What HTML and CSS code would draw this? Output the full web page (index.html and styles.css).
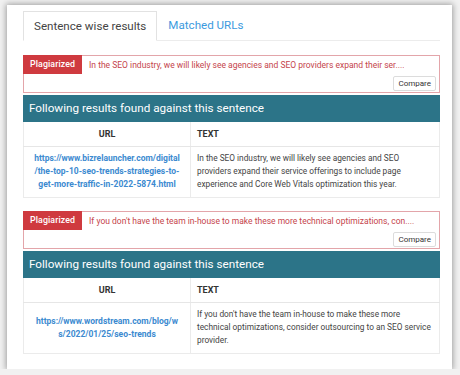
FILE: index.html
```html
<!DOCTYPE html>
<html>
<head>
<meta charset="utf-8">
<link rel="stylesheet" href="styles.css">
</head>
<body>
<div class="card">
  <div class="tabs">
    <div class="tab active">Sentence wise results</div>
    <div class="tab link">Matched URLs</div>
  </div>

  <div class="result first">
    <div class="plag">
      <div class="plag-row">
        <span class="badge">Plagiarized</span>
        <span class="sentence">In the SEO industry, we will likely see agencies and SEO providers expand their ser....</span>
      </div>
      <div class="btn-row"><button class="compare">Compare</button></div>
    </div>
    <div class="found">Following results found against this sentence</div>
    <table class="matches">
      <thead>
        <tr><th class="col-url">URL</th><th class="col-text">TEXT</th></tr>
      </thead>
      <tbody>
        <tr>
          <td class="cell-url"><a href="#">https://www.bizrelauncher.com/digital<br>/the-top-10-seo-trends-strategies-to-<br>get-more-traffic-in-2022-5874.html</a></td>
          <td class="cell-text">In the SEO industry, we will likely see agencies and SEO<br>providers expand their service offerings to include page<br>experience and Core Web Vitals optimization this year.</td>
        </tr>
      </tbody>
    </table>
  </div>

  <div class="result">
    <div class="plag">
      <div class="plag-row">
        <span class="badge">Plagiarized</span>
        <span class="sentence">If you don't have the team in-house to make these more technical optimizations, con....</span>
      </div>
      <div class="btn-row"><button class="compare">Compare</button></div>
    </div>
    <div class="found">Following results found against this sentence</div>
    <table class="matches">
      <thead>
        <tr><th class="col-url">URL</th><th class="col-text">TEXT</th></tr>
      </thead>
      <tbody>
        <tr>
          <td class="cell-url"><a href="#">https://www.wordstream.com/blog/w<br>s/2022/01/25/seo-trends</a></td>
          <td class="cell-text">If you don't have the team in-house to make these more<br>technical optimizations, consider outsourcing to an SEO service<br>provider.</td>
        </tr>
      </tbody>
    </table>
  </div>
</div>
</body>
</html>
```

FILE: styles.css
```css
html, body {
  margin: 0;
  padding: 0;
}
body {
  background: #f1f1f1;
  font-family: Roboto, "Liberation Sans", sans-serif;
  color: #333;
}
.card {
  width: 417px;
  margin: 5px 0 0 7px;
  padding: 6px 12px 15px 16px;
  background: #fff;
  box-shadow: 0 0 6px 1px rgba(0, 0, 0, 0.35);
}
.tabs {
  display: flex;
  align-items: flex-end;
  border-bottom: 1px solid #ececec;
  height: 29px;
}
.tab {
  font-size: 11.6px;
  height: 29px;
  line-height: 29px;
  box-sizing: border-box;
}
.tab.active {
  padding: 0 10px;
  border: 1px solid #e2e2e2;
  border-bottom-color: #fff;
  margin-bottom: -1px;
  height: 30px;
  color: #444;
  background: #fff;
}
.tab.link {
  margin-left: 11px;
  color: #3c9ade;
}
.result.first {
  margin-top: 14px;
}
.result {
  margin-top: 13px;
}
.plag {
  border: 1px solid #e3a5aa;
  height: 36px;
}
.plag-row {
  display: flex;
  align-items: center;
  height: 18px;
}
.badge {
  background: #cf3a3f;
  color: #fff;
  font-size: 8.8px;
  font-weight: 500;
  line-height: 19px;
  height: 19px;
  padding: 0 7px;
  margin: -1px 0 0 -1px;
  align-self: flex-start;
  letter-spacing: 0.1px;
}
.sentence {
  margin-left: 7px;
  color: #c5444c;
  font-size: 8.5px;
  white-space: nowrap;
  overflow: hidden;
}
.btn-row {
  display: flex;
  justify-content: flex-end;
  padding: 2px 3px 0 0;
}
.compare {
  font-family: Roboto, "Liberation Sans", sans-serif;
  font-size: 8px;
  color: #333;
  background: #fff;
  border: 1px solid #dcdcdc;
  border-radius: 2px;
  height: 15px;
  padding: 0 4px;
  line-height: 13px;
}
.found {
  margin-top: 2px;
  background: #2c7488;
  color: #fff;
  font-size: 11.7px;
  height: 27px;
  line-height: 27px;
  padding-left: 6px;
}
.matches {
  width: 100%;
  border-collapse: collapse;
  border: 1px solid #ebebeb;
  border-top: none;
  table-layout: fixed;
}
.matches th {
  font-size: 9px;
  font-weight: 700;
  color: #333;
  height: 24px;
  border-bottom: 1px solid #e6e6e6;
  padding: 0;
}
.matches th.col-url {
  width: 166px;
  text-align: center;
  border-right: 1px solid #ebebeb;
}
.matches th.col-text {
  text-align: left;
  padding-left: 6px;
}
.matches td {
  vertical-align: middle;
  padding: 5px 0 6px;
  line-height: 13px;
  font-size: 8.5px;
}
.cell-url {
  text-align: center;
  border-right: 1px solid #ebebeb;
}
.cell-url a {
  color: #3b8ad0;
  font-size: 8.5px;
  font-weight: 700;
  text-decoration: none;
}
.matches td.cell-text {
  font-size: 8.3px;
  color: #444;
  padding-left: 6px;
  white-space: nowrap;
}
```
